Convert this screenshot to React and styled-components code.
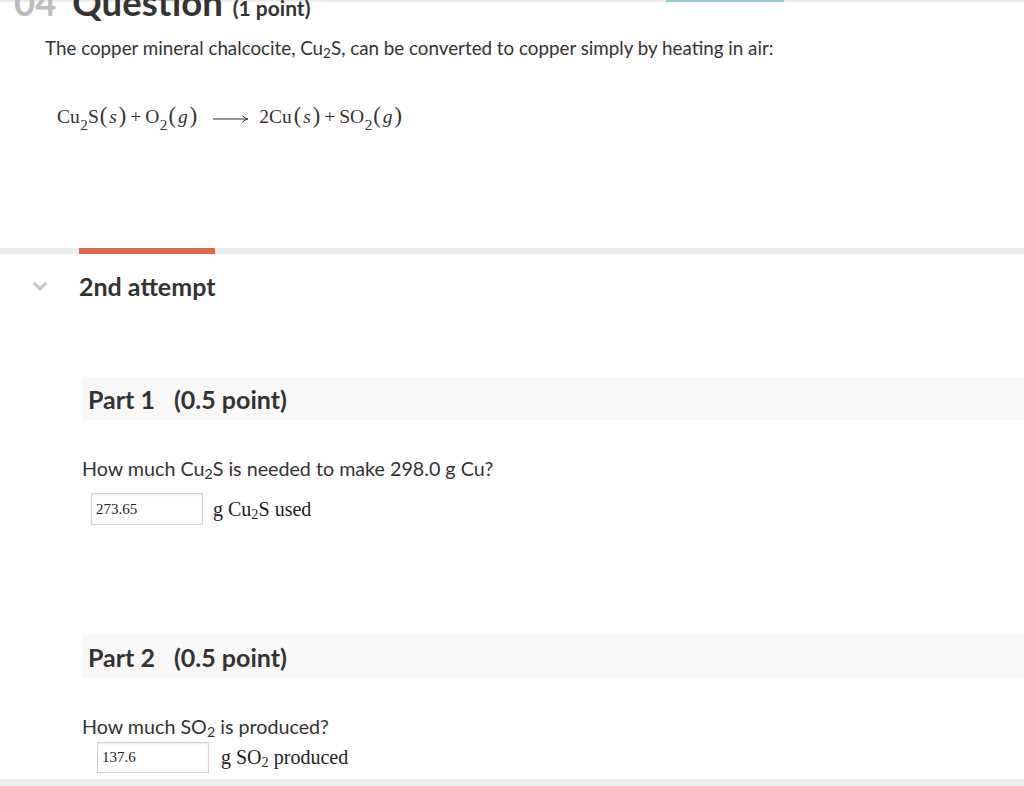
import React from "react";
import styled, { createGlobalStyle } from "styled-components";

const Global = createGlobalStyle`
  html, body { margin: 0; padding: 0; background: #fff; }
  body { font-family: Lato, "Open Sans", sans-serif; color: #333; }
  * { box-sizing: border-box; }
`;

const Page = styled.div`
  width: 1024px;
  height: 786px;
  overflow: hidden;
  display: flex;
  flex-direction: column;
`;

const TopStrip = styled.div`
  height: 3px;
  flex: none;
  display: flex;
  background: linear-gradient(#e4e4e4, #fff);
`;

const TopAccent = styled.div`
  margin-left: 666px;
  width: 118px;
  height: 2px;
  background: #9ccad2;
`;

const QuestionHeader = styled.h1`
  margin: -19px 0 0 14px;
  font-size: 36.5px;
  line-height: 37px;
  font-weight: 700;
  color: #333;
  display: flex;
  align-items: baseline;
  white-space: nowrap;
`;

const QNumber = styled.span`
  color: #bdbdbd;
  margin-right: 16px;
`;

const QPoints = styled.span`
  font-size: 21px;
  font-weight: 700;
  margin-left: 10px;
`;

const Intro = styled.p`
  margin: 10px 0 0 45px;
  font-size: 18.8px;
  line-height: 24px;
  color: #333;
`;

const Sub = styled.sub`
  font-size: 0.72em;
  vertical-align: -0.22em;
  line-height: 0;
`;

const Equation = styled.div`
  margin: 45px 0 0 57px;
  height: 24px;
  font-family: "Liberation Serif", "DejaVu Serif", serif;
  font-size: 19.5px;
  line-height: 24px;
  color: #333;
  white-space: nowrap;
`;

const EqSub = styled.sub`
  font-size: 0.78em;
  vertical-align: -0.45em;
  line-height: 0;
  margin-left: 0.5px;
`;

const Paren = styled.span`
  margin-left: ${(p) => p.$left || 0}px;
  font-size: 1.15em;
  line-height: 0;
`;

const Phase = styled.i`
  padding: 0 ${(p) => p.$pad || 2}px;
`;

const Op = styled.span`
  margin: 0 4px;
`;

const Arrow = styled.svg`
  display: inline-block;
  vertical-align: middle;
  width: 36px;
  height: 10px;
  margin: 0 10px 0 16px;
`;

const AttemptBar = styled.div`
  margin-top: 119px;
  height: 6px;
  flex: none;
  background: #ececec;
  display: flex;
`;

const AttemptProgress = styled.div`
  margin-left: 79px;
  width: 136px;
  background: #e0694b;
`;

const AttemptRow = styled.div`
  margin-top: 17px;
  display: flex;
  align-items: center;
  height: 30px;
`;

const Chevron = styled.svg`
  width: 16px;
  height: 11px;
  margin-left: 32px;
  margin-right: 31px;
`;

const AttemptTitle = styled.h2`
  margin: 0;
  font-size: 25px;
  line-height: 30px;
  font-weight: 700;
  color: #333;
`;

const Part = styled.section`
  margin-top: ${(p) => p.$top}px;
  margin-left: 82px;
  display: flex;
  flex-direction: column;
`;

const PartHeader = styled.div`
  height: 43px;
  background: #f8f8f8;
  display: flex;
  align-items: center;
  padding-left: 6px;
  font-size: 25px;
  font-weight: 700;
  color: #333;
  white-space: pre;
`;

const PartPoints = styled.span`
  margin-left: 19px;
`;

const Prompt = styled.p`
  margin: ${(p) => p.$top}px 0 0 0;
  font-size: 19.7px;
  line-height: 24px;
  color: #333;
`;

const AnswerRow = styled.div`
  margin-top: ${(p) => p.$top}px;
  margin-left: ${(p) => p.$indent}px;
  display: flex;
  align-items: center;
  gap: ${(p) => p.$gap}px;
`;

const AnswerInput = styled.input`
  width: 112px;
  height: ${(p) => p.$h}px;
  border: 1px solid #d4d4d4;
  box-shadow: inset 0 1px 2px rgba(0, 0, 0, 0.08);
  padding: 0 4px;
  font-family: "Liberation Serif", serif;
  font-size: 15px;
  color: #222;
  background: #fff;
  outline: none;
`;

const Unit = styled.span`
  font-family: "Liberation Serif", serif;
  font-size: 20px;
  color: #222;
`;

const BottomBar = styled.div`
  margin-top: 6px;
  height: 10px;
  flex: none;
  background: #ececec;
`;

export default function App() {
  return (
    <>
      <Global />
      <Page>
        <TopStrip>
          <TopAccent />
        </TopStrip>
        <QuestionHeader>
          <QNumber>04</QNumber>
          Question
          <QPoints>(1 point)</QPoints>
        </QuestionHeader>
        <Intro>
          The copper mineral chalcocite, Cu<Sub>2</Sub>S, can be converted to copper simply by heating in air:
        </Intro>
        <Equation>
          Cu<EqSub>2</EqSub>S<Paren $left={1}>(</Paren><Phase>s</Phase><Paren>)</Paren>
          <Op>+</Op>O<EqSub>2</EqSub><Paren $left={1}>(</Paren><Phase $pad={2}>g</Phase><Paren>)</Paren>
          <Arrow viewBox="0 0 36 10">
            <line x1="0" y1="5" x2="34" y2="5" stroke="#333" strokeWidth="1" />
            <path d="M29 1.5 Q32 4.5 35 5 Q32 5.5 29 8.5" fill="none" stroke="#333" strokeWidth="1" />
          </Arrow>
          2Cu<Paren $left={2}>(</Paren><Phase>s</Phase><Paren>)</Paren>
          <Op>+</Op>SO<EqSub>2</EqSub><Paren $left={1}>(</Paren><Phase $pad={2}>g</Phase><Paren>)</Paren>
        </Equation>
        <AttemptBar>
          <AttemptProgress />
        </AttemptBar>
        <AttemptRow>
          <Chevron viewBox="0 0 16 11">
            <path d="M2 2 L8 8 L14 2" fill="none" stroke="#c8c8c8" strokeWidth="3.2" />
          </Chevron>
          <AttemptTitle>2nd attempt</AttemptTitle>
        </AttemptRow>
        <Part $top={76}>
          <PartHeader>
            Part 1<PartPoints>(0.5 point)</PartPoints>
          </PartHeader>
          <Prompt $top={37}>
            How much Cu<Sub>2</Sub>S is needed to make 298.0 g Cu?
          </Prompt>
          <AnswerRow $top={12} $indent={9} $gap={10}>
            <AnswerInput $h={32} defaultValue="273.65" />
            <Unit>
              g Cu<Sub>2</Sub>S used
            </Unit>
          </AnswerRow>
        </Part>
        <Part $top={110}>
          <PartHeader>
            Part 2<PartPoints>(0.5 point)</PartPoints>
          </PartHeader>
          <Prompt $top={37}>
            How much SO<Sub>2</Sub> is produced?
          </Prompt>
          <AnswerRow $top={3} $indent={15} $gap={12}>
            <AnswerInput $h={31} defaultValue="137.6" />
            <Unit>
              g SO<Sub>2</Sub> produced
            </Unit>
          </AnswerRow>
        </Part>
        <BottomBar />
      </Page>
    </>
  );
}
